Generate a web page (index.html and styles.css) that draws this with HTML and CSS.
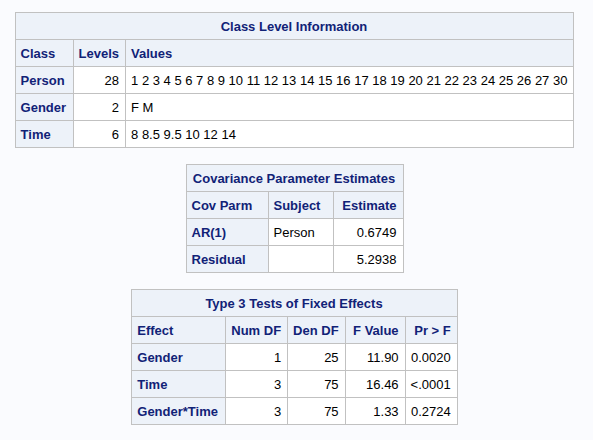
FILE: index.html
```html
<!DOCTYPE html>
<html>
<head>
<meta charset="utf-8">
<link rel="stylesheet" href="styles.css">
</head>
<body>
<div class="page">
  <table class="sas">
    <thead>
      <tr><th class="title" colspan="3">Class Level Information</th></tr>
      <tr><th class="hdr w46">Class</th><th class="hdr w40">Levels</th><th class="hdr">Values</th></tr>
    </thead>
    <tbody>
      <tr><th class="rowh">Person</th><td class="num">28</td><td>1 2 3 4 5 6 7 8 9 10 11 12 13 14 15 16 17 18 19 20 21 22 23 24 25 26 27 30</td></tr>
      <tr><th class="rowh">Gender</th><td class="num">2</td><td>F M</td></tr>
      <tr><th class="rowh">Time</th><td class="num">6</td><td>8 8.5 9.5 10 12 14</td></tr>
    </tbody>
  </table>

  <table class="sas">
    <thead>
      <tr><th class="title" colspan="3">Covariance Parameter Estimates</th></tr>
      <tr><th class="hdr w70">Cov Parm</th><th class="hdr w53">Subject</th><th class="hdr num w58">Estimate</th></tr>
    </thead>
    <tbody>
      <tr><th class="rowh">AR(1)</th><td>Person</td><td class="num">0.6749</td></tr>
      <tr><th class="rowh">Residual</th><td></td><td class="num">5.2938</td></tr>
    </tbody>
  </table>

  <table class="sas">
    <thead>
      <tr><th class="title" colspan="5">Type 3 Tests of Fixed Effects</th></tr>
      <tr><th class="hdr w82">Effect</th><th class="hdr num w49">Num DF</th><th class="hdr num w45">Den DF</th><th class="hdr num w48">F Value</th><th class="hdr num w39">Pr &gt; F</th></tr>
    </thead>
    <tbody>
      <tr><th class="rowh">Gender</th><td class="num">1</td><td class="num">25</td><td class="num">11.90</td><td class="num">0.0020</td></tr>
      <tr><th class="rowh">Time</th><td class="num">3</td><td class="num">75</td><td class="num">16.46</td><td class="num">&lt;.0001</td></tr>
      <tr><th class="rowh">Gender*Time</th><td class="num">3</td><td class="num">75</td><td class="num">1.33</td><td class="num">0.2724</td></tr>
    </tbody>
  </table>
</div>
</body>
</html>
```
FILE: styles.css
```css
html, body {
  margin: 0;
  padding: 0;
  background: #fafbfe;
}
.page {
  width: 589px;
  padding-top: 12px;
  display: flex;
  flex-direction: column;
  align-items: center;
  gap: 16px;
}
.sas {
  border-collapse: collapse;
  border: 1px solid #c1c1c1;
  font-family: "Liberation Sans", Arial, sans-serif;
  font-size: 13px;
  line-height: 15px;
}
.sas th, .sas td {
  border: 1px solid #c1c1c1;
  padding: 6px 6px 5px 5px;
  text-align: left;
  white-space: nowrap;
  vertical-align: middle;
}
.sas th {
  background: #edf2f9;
  color: #112277;
  font-weight: bold;
}
.sas td {
  background: #ffffff;
  color: #000000;
}
.sas .title {
  text-align: center;
}
.sas .num {
  text-align: right;
}
.w39 { width: 39px; }
.w40 { width: 40px; }
.w45 { width: 45px; }
.w46 { width: 46px; }
.w48 { width: 48px; }
.w49 { width: 49px; }
.w53 { width: 53px; }
.w58 { width: 58px; }
.w70 { width: 70px; }
.w82 { width: 82px; }
```
